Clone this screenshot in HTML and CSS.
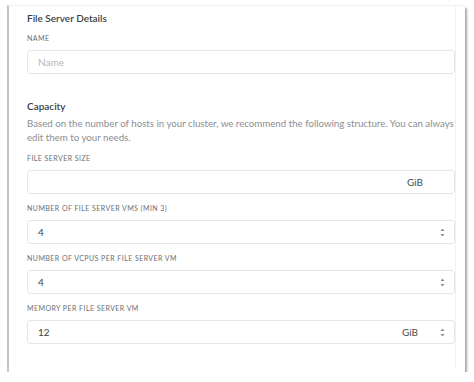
FILE: index.html
```html
<!DOCTYPE html>
<html lang="en">
<head>
    <meta charset="UTF-8">
    <title>File Server Details</title>
    <link rel="stylesheet" href="styles.css">
</head>
<body>

<div class="panel">
    <div class="panel-body">
        <h2 class="section-title">File Server Details</h2>
        <div class="field">
            <label class="field-label">Name</label>
            <div class="input"><span class="placeholder">Name</span></div>
        </div>

        <h2 class="section-title capacity">Capacity</h2>
        <p class="hint">Based on the number of hosts in your cluster, we recommend the following structure. You can always edit them to your needs.</p>

        <div class="field">
            <label class="field-label">File Server Size</label>
            <div class="input"><span class="value"></span><span class="unit">GiB</span></div>
        </div>
        <div class="field">
            <label class="field-label">Number of File Server VMs (min 3)</label>
            <div class="input"><span class="value">4</span><span class="spinner"><svg width="5" height="9" viewBox="0 0 5 9"><path d="M2.5 0.5 L4.5 3 H0.5 Z M2.5 8.5 L4.5 6 H0.5 Z" fill="#8a8d92"/></svg></span></div>
        </div>
        <div class="field">
            <label class="field-label">Number of vCPUs per File Server VM</label>
            <div class="input"><span class="value">4</span><span class="spinner"><svg width="5" height="9" viewBox="0 0 5 9"><path d="M2.5 0.5 L4.5 3 H0.5 Z M2.5 8.5 L4.5 6 H0.5 Z" fill="#8a8d92"/></svg></span></div>
        </div>
        <div class="field">
            <label class="field-label">Memory per File Server VM</label>
            <div class="input"><span class="value">12</span><span class="unit">GiB</span><span class="spinner"><svg width="5" height="9" viewBox="0 0 5 9"><path d="M2.5 0.5 L4.5 3 H0.5 Z M2.5 8.5 L4.5 6 H0.5 Z" fill="#8a8d92"/></svg></span></div>
        </div>
    </div>
</div>

</body>
</html>
```

FILE: styles.css
```css
body {
    margin: 0;
    background: #fff;
    font-family: 'Lato', 'Open Sans', sans-serif;
    color: #4a4d52;
}

.panel {
    margin: 5px 0 0 7px;
    width: 456px;
    height: 366px;
    background: #fff;
    border-left: 2px solid #c4c4c4;
    border-top: 1px solid #f0f0f0;
    box-shadow: 2px 3px 2px rgba(0, 0, 0, 0.35);
}

.panel-body {
    width: 428px;
    height: 355px;
    padding: 6px 0 0 18px;
    border-right: 1px solid #f0f1f2;
}

.section-title {
    margin: 0;
    font-size: 10px;
    line-height: 12px;
    font-weight: 600;
    color: #3c3f44;
}

.section-title.capacity {
    margin-top: 26px;
}

.hint {
    margin: 4px 0 0;
    width: 428px;
    font-size: 9.7px;
    line-height: 14px;
    color: #8b8e93;
}

.field {
    margin-top: 10px;
}

.field-label {
    display: block;
    height: 9px;
    font-size: 7px;
    line-height: 9px;
    text-transform: uppercase;
    letter-spacing: 0.45px;
    color: #6b6e73;
}

.input {
    margin-top: 7px;
    height: 22px;
    border: 1px solid #e4e6e9;
    border-radius: 3px;
    display: flex;
    align-items: center;
    padding: 0 9px 0 10px;
    font-size: 10px;
    color: #3c3f44;
}

.placeholder {
    color: #b4b7bb;
}

.value {
    flex: 1;
}

.unit {
    margin-right: 22px;
    color: #4a4d52;
}

.spinner {
    display: flex;
    align-items: center;
}
```
